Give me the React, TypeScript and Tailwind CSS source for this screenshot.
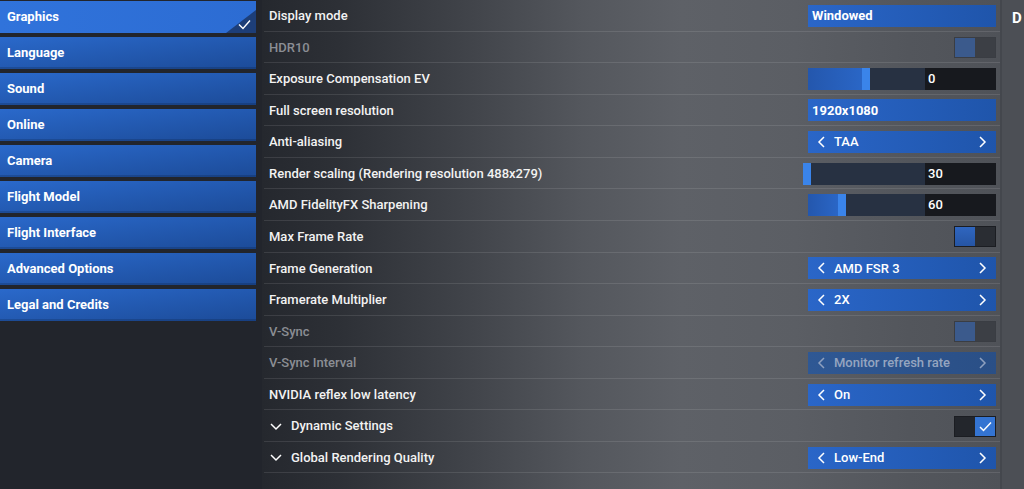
import React from "react";

const MENU = [
  "Graphics",
  "Language",
  "Sound",
  "Online",
  "Camera",
  "Flight Model",
  "Flight Interface",
  "Advanced Options",
  "Legal and Credits",
];

type Row =
  | { label: string; kind: "plain"; value: string; off?: boolean }
  | { label: string; kind: "pick"; value: string; off?: boolean }
  | { label: string; kind: "toggle"; state: "dim" | "on" | "check" }
  | { label: string; kind: "slider"; fill: number; value: string }
  | { label: string; kind: "group"; control: React.ReactNode };

function Chevron({ dir, dim }: { dir: "l" | "r" | "d"; dim?: boolean }) {
  const d = dir === "l" ? "M8 2 L3 7 L8 12" : dir === "r" ? "M3 2 L8 7 L3 12" : "M1 3 L6 8 L11 3";
  return (
    <svg
      width={dir === "d" ? 12 : 11}
      height={dir === "d" ? 11 : 14}
      viewBox={dir === "d" ? "0 0 12 11" : "0 0 11 14"}
      className={dim ? "text-[#8ea0bf]" : "text-white"}
    >
      <path d={d} fill="none" stroke="currentColor" strokeWidth="1.5" />
    </svg>
  );
}

function Plain({ value }: { value: string }) {
  return (
    <div className="w-[188px] h-[22px] flex items-center pl-1 bg-gradient-to-r from-[#2a66c8] to-[#1f55ab] text-[13px] font-bold text-white">
      {value}
    </div>
  );
}

function Pick({ value, off }: { value: string; off?: boolean }) {
  return (
    <div
      className={
        off
          ? "w-[188px] h-[22px] flex items-center px-[8px] bg-gradient-to-r from-[#2f5894] to-[#2a4f86] text-[13px] font-medium text-[#95a5c0]"
          : "w-[188px] h-[22px] flex items-center px-[8px] bg-gradient-to-r from-[#2a66c8] to-[#1f55ab] text-[13px] font-medium text-white"
      }
    >
      <Chevron dir="l" dim={off} />
      <span className="ml-[7px] flex-1">{value}</span>
      <Chevron dir="r" dim={off} />
    </div>
  );
}

function Toggle({ state }: { state: "dim" | "on" | "check" }) {
  if (state === "check") {
    return (
      <div className="w-[42px] h-[21px] flex border border-[#1b1d22]">
        <div className="flex-1 bg-[#23262c]" />
        <div className="flex-1 bg-[#3474d2] flex items-center justify-center">
          <svg width="13" height="11" viewBox="0 0 13 11">
            <path d="M1 6 L4.5 9.5 L12 1.5" fill="none" stroke="white" strokeWidth="1.5" />
          </svg>
        </div>
      </div>
    );
  }
  return (
    <div className={state === "on" ? "w-[42px] h-[21px] flex border border-[#1b1d22]" : "w-[42px] h-[21px] flex border border-[#3a3d43]"}>
      <div className={state === "on" ? "flex-1 bg-gradient-to-b from-[#2f66c0] to-[#2655a4]" : "flex-1 bg-[#3b5a8c]"} />
      <div className={state === "on" ? "flex-1 bg-[#2a2d33]" : "flex-1 bg-[#3c3f45]"} />
    </div>
  );
}

function Slider({ fill, value }: { fill: number; value: string }) {
  return (
    <div className="w-[188px] h-[22px] flex">
      <div className="w-[117px] flex bg-[#273142]">
        <div className="h-full bg-gradient-to-r from-[#2457ad] to-[#2a66c6]" style={{ width: fill }} />
        <div className={fill === 0 ? "w-[8px] h-full bg-[#3a84ea] -ml-[5px]" : "w-[8px] h-full bg-[#3a84ea]"} />
      </div>
      <div className="flex-1 bg-[#17191e] flex items-center pl-[3px] text-[13px] font-medium text-white">{value}</div>
    </div>
  );
}

const ROWS: Row[] = [
  { label: "Display mode", kind: "plain", value: "Windowed" },
  { label: "HDR10", kind: "toggle", state: "dim" },
  { label: "Exposure Compensation EV", kind: "slider", fill: 54, value: "0" },
  { label: "Full screen resolution", kind: "plain", value: "1920x1080" },
  { label: "Anti-aliasing", kind: "pick", value: "TAA" },
  { label: "Render scaling (Rendering resolution 488x279)", kind: "slider", fill: 0, value: "30" },
  { label: "AMD FidelityFX Sharpening", kind: "slider", fill: 30, value: "60" },
  { label: "Max Frame Rate", kind: "toggle", state: "on" },
  { label: "Frame Generation", kind: "pick", value: "AMD FSR 3" },
  { label: "Framerate Multiplier", kind: "pick", value: "2X" },
  { label: "V-Sync", kind: "toggle", state: "dim" },
  { label: "V-Sync Interval", kind: "pick", value: "Monitor refresh rate", off: true },
  { label: "NVIDIA reflex low latency", kind: "pick", value: "On" },
  { label: "Dynamic Settings", kind: "group", control: <Toggle state="check" /> },
  { label: "Global Rendering Quality", kind: "group", control: <Pick value="Low-End" /> },
];

function isOff(r: Row) {
  return r.label === "HDR10" || r.label === "V-Sync" || r.label === "V-Sync Interval";
}

export default function App() {
  return (
    <div className="flex w-[1024px] h-[489px] overflow-hidden bg-[#22252c] font-['Roboto',sans-serif]">
      <aside className="w-[262px] shrink-0 flex flex-col gap-[4px] pt-[1px]">
        {MENU.map((m, i) => (
          <div
            key={m}
            className={
              i === 0
                ? "relative w-[256px] h-[32px] flex items-center pl-[7px] bg-gradient-to-r from-[#3073db] to-[#2c6cd3] text-[13px] font-bold text-white"
                : "w-[256px] h-[32px] flex items-center pl-[7px] bg-gradient-to-br from-[#2a69cb] to-[#1c4b98] text-[13px] font-bold text-white shadow-[inset_0_-2px_0_rgba(0,0,0,0.15)]"
            }
          >
            {m}
            {i === 0 && (
              <svg className="absolute right-0 bottom-0" width="30" height="23" viewBox="0 0 30 23">
                <path d="M0 23 L30 0 L30 23 Z" fill="#1d3e78" />
                <path d="M13 14.5 L17 18.5 L24 10.5" fill="none" stroke="white" strokeWidth="1.4" />
              </svg>
            )}
          </div>
        ))}
      </aside>

      <main className="flex-1 flex bg-[linear-gradient(90deg,#25282e_0%,#2d3036_10%,#3e4147_25%,#54575d_42%,#5e6167_55%,#5b5e64_70%,#53565c_85%,#4e5157_100%)]">
        <div className="w-[738px] shrink-0 pl-[2px]">
          {ROWS.map((r) => (
            <div
              key={r.label}
              className="h-[31.57px] flex items-center justify-between pl-[5px] pr-[4px] pt-[1px] border-b border-white/10"
            >
              <div
                className={
                  isOff(r)
                    ? "flex items-center text-[13px] font-medium text-[#8b8e94]"
                    : "flex items-center text-[13px] font-medium text-[#f2f2f2]"
                }
              >
                {r.kind === "group" && (
                  <span className="mr-[9px] ml-[1px] flex">
                    <Chevron dir="d" />
                  </span>
                )}
                {r.label}
              </div>
              {r.kind === "plain" && <Plain value={r.value} />}
              {r.kind === "pick" && <Pick value={r.value} off={r.off} />}
              {r.kind === "toggle" && <Toggle state={r.state} />}
              {r.kind === "slider" && <Slider fill={r.fill} value={r.value} />}
              {r.kind === "group" && r.control}
            </div>
          ))}
        </div>
        <div className="flex-1 border-l-2 border-[#44474d] bg-[#4c4f55] pl-[10px] pt-[6px]">
          <span className="text-[15px] font-bold text-white">D</span>
        </div>
      </main>
    </div>
  );
}
